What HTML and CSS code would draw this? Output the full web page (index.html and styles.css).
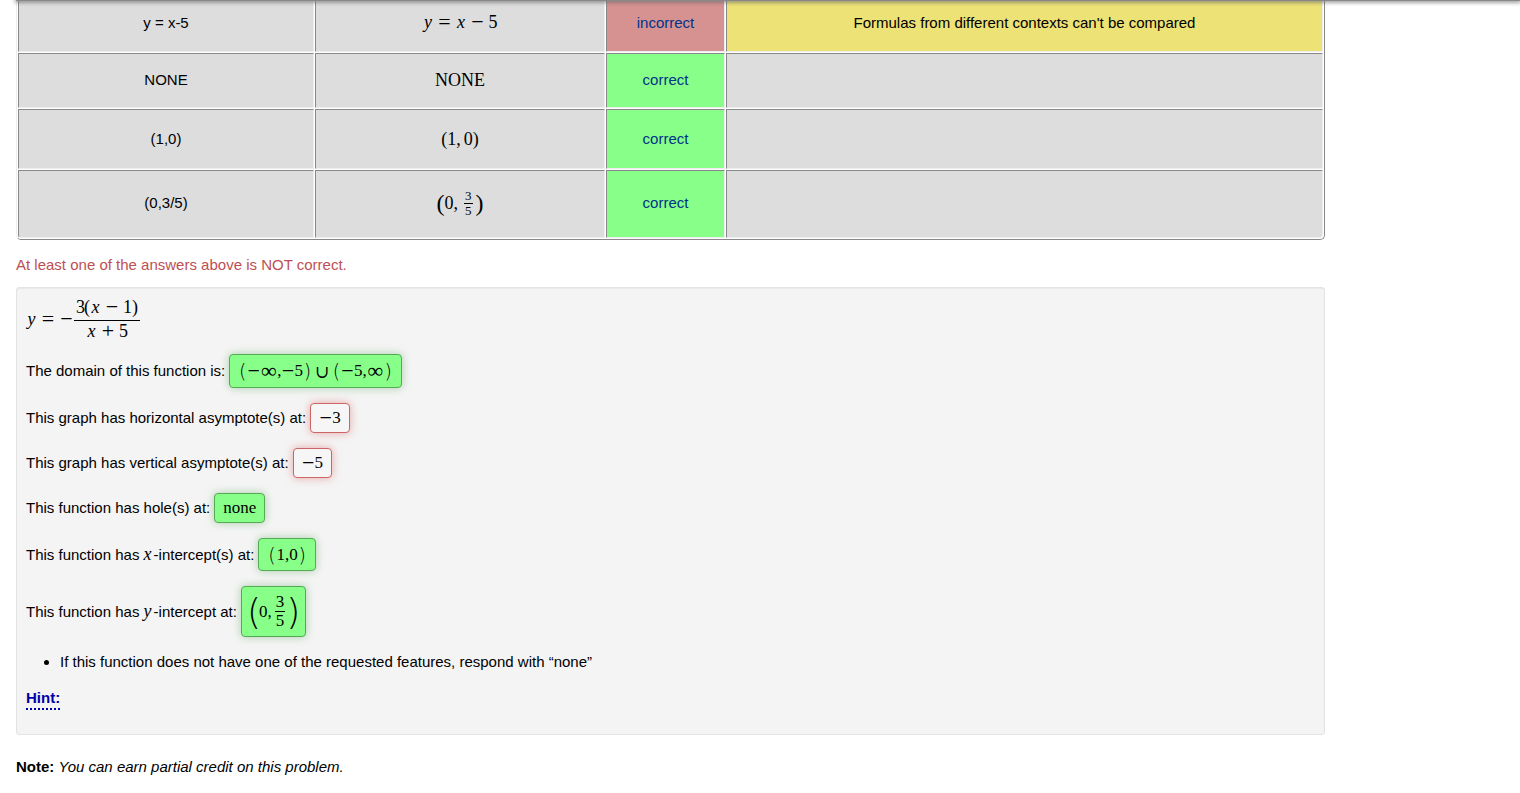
FILE: index.html
```html
<!DOCTYPE html>
<html lang="en">
<head>
<meta charset="utf-8">
<title>Rational function problem</title>
<link rel="stylesheet" href="styles.css">
</head>
<body>
<div class="topbar"></div>
<main class="page">
  <table class="results">
    <colgroup><col class="col-entered"><col class="col-preview"><col class="col-result"><col></colgroup>
    <tbody>
      <tr class="row-clipped">
        <td>y = x-5</td>
        <td><span class="math"><i>y</i><span class="op">=</span><i>x</i><span class="op">−</span>5</span></td>
        <td class="wrong"><a href="#answers">incorrect</a></td>
        <td class="message">Formulas from different contexts can't be compared</td>
      </tr>
      <tr class="row-short">
        <td>NONE</td>
        <td><span class="math">NONE</span></td>
        <td class="right"><a href="#answers">correct</a></td>
        <td></td>
      </tr>
      <tr class="row-medium">
        <td>(1,0)</td>
        <td><span class="math">(1<span class="comma">,</span>0)</span></td>
        <td class="right"><a href="#answers">correct</a></td>
        <td></td>
      </tr>
      <tr class="row-tall">
        <td>(0,3/5)</td>
        <td><span class="math"><span class="paren-mid">(</span>0<span class="comma wide">,</span><span class="frac small"><span class="num">3</span><span>5</span></span><span class="paren-mid">)</span></span></td>
        <td class="right"><a href="#answers">correct</a></td>
        <td></td>
      </tr>
    </tbody>
  </table>

  <p class="summary">At least one of the answers above is NOT correct.</p>

  <section class="problem" id="answers">
    <div class="line equation"><span class="math"><i>y</i><span class="op">=</span><span class="sign">−</span><span class="frac"><span class="num"><span class="tight">3</span>(<i>x</i><span class="op">−</span>1)</span><span><i>x</i><span class="op">+</span>5</span></span></span></div>
    <div class="line">The domain of this function is: <span class="answer ok domain math"><span class="paren">(</span><span class="sign">−</span><span class="sym">∞</span>,<span class="sign">−</span>5<span class="paren">)</span><span class="cup">∪</span><span class="paren">(</span><span class="sign">−</span>5,<span class="sym">∞</span><span class="paren">)</span></span></div>
    <div class="line">This graph has horizontal asymptote(s) at: <span class="answer bad math"><span class="sign">−</span>3</span></div>
    <div class="line">This graph has vertical asymptote(s) at: <span class="answer bad math"><span class="sign">−</span>5</span></div>
    <div class="line">This function has hole(s) at: <span class="answer ok math">none</span></div>
    <div class="line"><span>This function has <i class="var">x</i>-intercept(s) at:</span> <span class="answer ok point math"><span class="paren">(</span>1,0<span class="paren">)</span></span></div>
    <div class="line"><span>This function has <i class="var">y</i>-intercept at:</span> <span class="answer ok fraction math"><span class="paren-big">(</span>0<span class="comma">,</span><span class="frac"><span class="num">3</span><span>5</span></span><span class="paren-big">)</span></span></div>
    <ul class="notes"><li>If this function does not have one of the requested features, respond with “none”</li></ul>
    <div><a class="hint" href="#hint">Hint:</a></div>
  </section>

  <p class="credit"><b>Note:</b> <i>You can earn partial credit on this problem.</i></p>
</main>
</body>
</html>
```
FILE: styles.css
```css
* { box-sizing: border-box; }

body {
  margin: 0;
  background: #fff;
  color: #000;
  font: 15px/20px "Liberation Sans", Arial, sans-serif;
}

.topbar {
  position: fixed;
  top: 0;
  left: 16px;
  right: 0;
  height: 1px;
  background: #888;
  box-shadow: 0 0 4px 1px #666;
}

.page { margin: 0 195px 0 16px; }

.results {
  width: 100%;
  table-layout: fixed;
  border-collapse: separate;
  border-spacing: 1px;
  border: 1px solid #888;
  border-top: 0;
  border-left-color: #eee;
  border-radius: 0 0 5px 5px;
  margin-top: -1px;
  text-align: center;
}
.col-entered { width: 296px; }
.col-preview { width: 290px; }
.col-result { width: 119px; }

.results td {
  padding: 0;
  background: #ddd;
  border: 1px solid #eee;
  border-top-color: #888;
  border-left-color: #888;
  vertical-align: middle;
}
.results tr:last-child td:first-child { border-bottom-left-radius: 3px; }
.results tr:last-child td:last-child { border-bottom-right-radius: 3px; }
.results .row-clipped td { height: 52px; padding-bottom: 6px; border-top: 0; }
.results .row-short td { height: 55px; padding-bottom: 1px; }
.results .row-medium td { height: 60px; }
.results .row-tall td { height: 68px; padding-bottom: 2px; }
.results .wrong { background: #d69191; }
.results .right { background: #8f8; }
.results .message { background: #ede275; }
.results a { color: #038; text-decoration: none; }

.math {
  display: inline-flex;
  align-items: center;
  font: 18px/20px "Liberation Serif", "Times New Roman", serif;
}
.math i { font-style: italic; width: 11px; text-align: center; }
.op, .sign, .sym { font-size: 22px; }
.op, .sign, .sym, .cup { display: flex; justify-content: center; }
.op { width: 22px; }
.sign { width: 14px; }
.comma { margin-right: 3px; }
.comma.wide { margin-right: 6px; }
.frac {
  display: inline-flex;
  flex-direction: column;
  align-items: stretch;
  text-align: center;
}
.frac > span { display: flex; justify-content: center; padding: 0 1px; }
.num { border-bottom: 1px solid #000; }
.frac.small { font-size: 13px; line-height: 14px; margin-right: 3px; }
.paren-mid { font-size: 24px; }

.summary { margin: 15px 0 12px; color: #bd4f54; }

.problem {
  display: flex;
  flex-direction: column;
  gap: 15px;
  padding: 9px 9px 24px;
  background: #f4f4f4;
  border: 1px solid #e3e3e3;
  border-radius: 3px;
  box-shadow: inset 0 1px 1px rgba(0, 0, 0, 0.05);
}
.line { display: flex; align-items: center; gap: 4px; }
.equation { height: 42px; padding-top: 2px; }
.equation .sign { width: 15px; }
.equation .frac > span { padding: 0 2px; }
.equation .frac > .num { padding-bottom: 3px; }
.tight { margin-right: -1px; }

.answer {
  min-height: 30px;
  padding: 0 8px;
  border: 1px solid #55aa55;
  border-radius: 4px;
  font-size: 17px;
}
.answer .sign { width: 13px; }
.ok { background: #8f8; box-shadow: 0 0 8px rgba(60, 150, 60, 0.4); }
.bad { background: #f6f6f6; border-color: #c66; box-shadow: 0 0 8px rgba(220, 90, 90, 0.5); }
.domain { height: 34px; }
.point { height: 33px; }
.fraction { height: 51px; padding: 0 7px; }
.paren, .paren-big {
  display: flex;
  justify-content: center;
  font-family: "DejaVu Sans Light", "DejaVu Sans", sans-serif;
  font-weight: 200;
}
.paren { width: 9px; font-size: 19px; }
.sym { width: 17px; }
.cup { width: 20px; font-family: "DejaVu Sans Light", "DejaVu Math TeX Gyre", serif; font-weight: 200; }
.paren-big { width: 10px; font-size: 36px; line-height: 40px; }
.fraction .frac { line-height: 18px; margin-right: 3px; }
.var {
  display: inline-block;
  width: 10px;
  font: italic 18px/20px "Liberation Serif", serif;
}

.notes { margin: 0; padding-left: 34px; }
.hint {
  display: inline-block;
  color: #00a;
  font-weight: bold;
  line-height: 21px;
  text-decoration: none;
  border-bottom: 2px dotted #00a;
}
.credit { margin: 22px 0 0; }
```
